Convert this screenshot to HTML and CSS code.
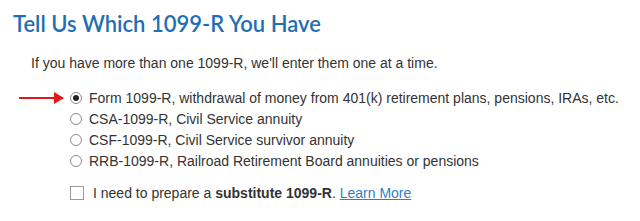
FILE: index.html
```html
<!DOCTYPE html>
<html>
<head>
<meta charset="utf-8">
<link rel="stylesheet" href="styles.css">
</head>
<body>
<div class="page">
  <h1 class="title">Tell Us Which 1099-R You Have</h1>
  <p class="intro">If you have more than one 1099-R, we'll enter them one at a time.</p>
  <div class="options">
    <label class="option">
      <span class="marker"><span class="arrow"></span></span>
      <span class="radio checked"></span>
      <span class="label">Form 1099-R, withdrawal of money from 401(k) retirement plans, pensions, IRAs, etc.</span>
    </label>
    <label class="option">
      <span class="marker"></span>
      <span class="radio"></span>
      <span class="label">CSA-1099-R, Civil Service annuity</span>
    </label>
    <label class="option">
      <span class="marker"></span>
      <span class="radio"></span>
      <span class="label">CSF-1099-R, Civil Service survivor annuity</span>
    </label>
    <label class="option">
      <span class="marker"></span>
      <span class="radio"></span>
      <span class="label">RRB-1099-R, Railroad Retirement Board annuities or pensions</span>
    </label>
  </div>
  <div class="substitute">
    <span class="checkbox"></span>
    <span class="label">I need to prepare a <b>substitute 1099-R</b>. <a class="link" href="#">Learn More</a></span>
  </div>
</div>
</body>
</html>
```
FILE: styles.css
```css
html, body {
  margin: 0;
  padding: 0;
  background: #ffffff;
}
.page {
  width: 640px;
  height: 221px;
  overflow: hidden;
  font-family: "Liberation Sans", Arial, sans-serif;
  font-size: 14px;
  color: #333333;
}
.title {
  margin: 0;
  padding: 10px 0 0 13px;
  font-family: Lato, "Open Sans", sans-serif;
  font-weight: 600;
  font-size: 22px;
  line-height: 28px;
  color: #1f6fb5;
}
.intro {
  margin: 15px 0 0 31px;
  line-height: 20px;
}
.options {
  margin-top: 14px;
  display: flex;
  flex-direction: column;
}
.option {
  display: flex;
  align-items: center;
  height: 21px;
}
.marker {
  width: 70px;
  display: flex;
  align-items: center;
  padding-left: 19px;
  box-sizing: border-box;
}
.arrow {
  position: relative;
  width: 44px;
  height: 2px;
  background: #e0191b;
}
.arrow::after {
  content: "";
  position: absolute;
  right: -1px;
  top: -5px;
  border-left: 10px solid #e0191b;
  border-top: 6px solid transparent;
  border-bottom: 6px solid transparent;
}
.radio {
  width: 12px;
  height: 12px;
  box-sizing: border-box;
  border: 1px solid #8a8a8a;
  border-radius: 50%;
  display: flex;
  align-items: center;
  justify-content: center;
  flex: none;
}
.radio.checked::after {
  content: "";
  width: 6px;
  height: 6px;
  border-radius: 50%;
  background: #222;
}
.option .label {
  margin-left: 7px;
}
.substitute {
  margin-top: 11px;
  padding-left: 70px;
  display: flex;
  align-items: center;
  height: 21px;
}
.checkbox {
  width: 14px;
  height: 14px;
  box-sizing: border-box;
  border: 1px solid #9a9a9a;
  flex: none;
}
.substitute .label {
  margin-left: 9px;
}
.link {
  color: #2f7fc7;
  text-decoration: underline;
}
```
